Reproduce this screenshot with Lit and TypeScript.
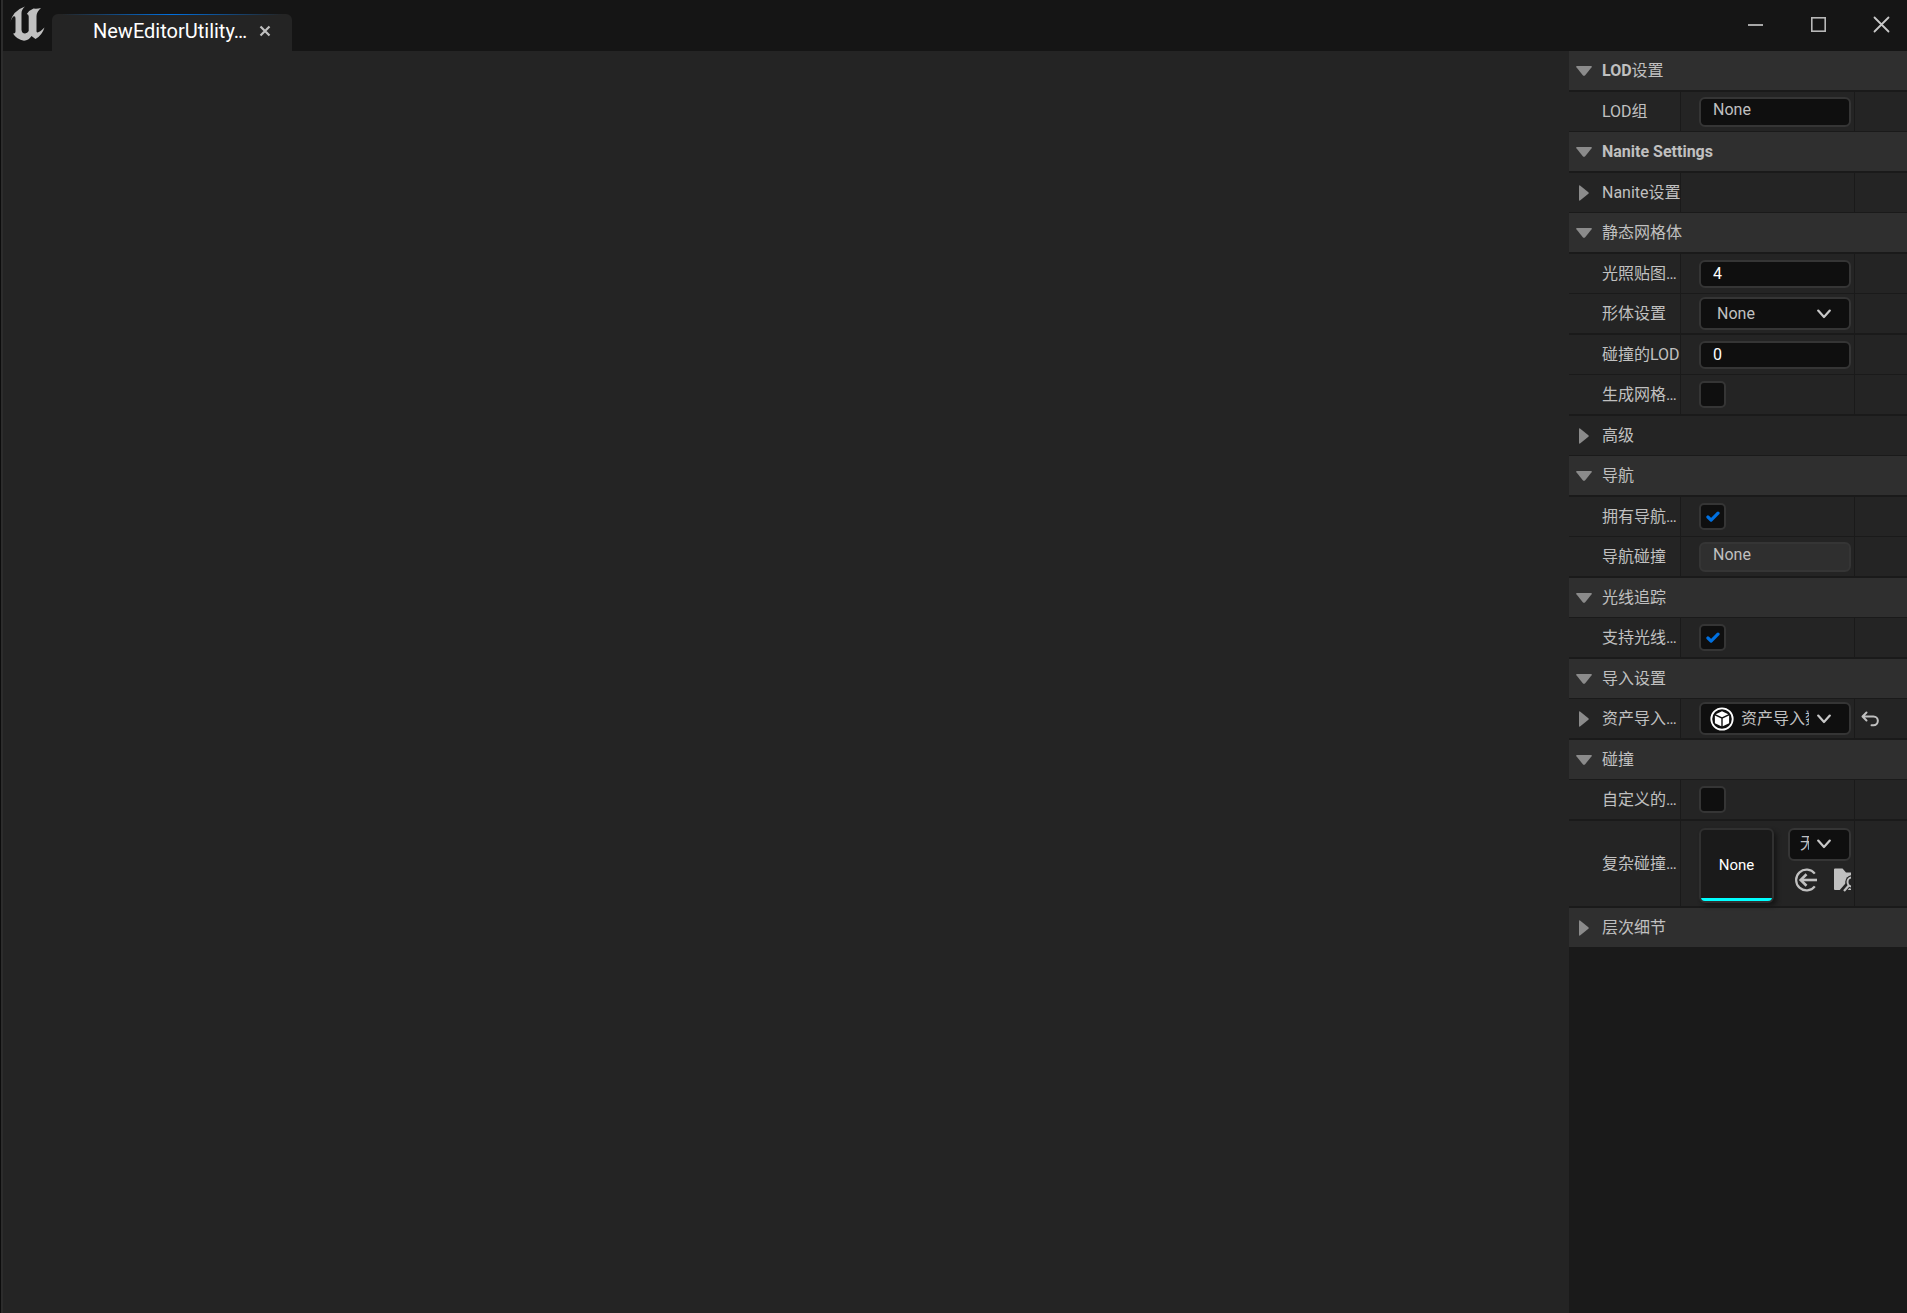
import { LitElement, html, css, svg, nothing, TemplateResult } from "lit";
import { customElement, state } from "lit/decorators.js";

type Row =
  | { kind: "category"; strong?: string; text?: string; open: boolean }
  | { kind: "group"; text: string }
  | { kind: "field"; text: string; id: string; expandable?: boolean; control?: TemplateResult; reset?: boolean; tall?: boolean };

const chevron = html`<svg class="chevron" viewBox="0 0 14 10" aria-hidden="true">
  <path d="M1.2 1.6 7 8 12.8 1.6" fill="none" stroke="#c8c8c8" stroke-width="2.2" stroke-linecap="round" stroke-linejoin="round" />
</svg>`;

const arrow = (open: boolean) => html`<svg class="arrow" viewBox="0 0 16 16" aria-hidden="true">
  ${open
    ? svg`<path d="M1 3h14q1.4.2.6 1.3L9.2 12.2Q8 13.4 6.8 12.2L.4 4.3Q-.4 3.2 1 3Z" fill="#8b8b8b"/>`
    : svg`<path d="M3 1.2Q3 0 4 .4L12.4 7.2Q13.2 8 12.4 8.8L4 15.6Q3 16 3 14.8Z" fill="#8b8b8b"/>`}
</svg>`;

const cube = html`<svg class="cube" viewBox="0 0 24 24" aria-hidden="true">
  <circle cx="12" cy="12" r="10.7" fill="none" stroke="#fff" stroke-width="1.8" />
  <path d="M12 4.2 18.3 7.2 12 10.3 5.7 7.2Z" fill="#fff" />
  <path d="M4.9 8.4 11.3 11.5V19.3L4.9 16.2Z" fill="#fff" />
  <path d="M19.1 8.4 12.7 11.5V19.3L19.1 16.2Z" fill="#fff" />
</svg>`;

const textBox = (id: string, value: string) => html`<input class="box text" id=${id} type="text" .value=${value} />`;
const numberBox = (id: string, value: string) =>
  html`<input class="box number" id=${id} type="text" inputmode="numeric" .value=${value} />`;
const tick = (id: string, on: boolean) => html`<span class="tick">
  <input id=${id} type="checkbox" .checked=${on} />
  <svg viewBox="0 0 14 12" aria-hidden="true"><path d="M1.9 6 5.1 9.1 12 2.2" fill="none" stroke="#0070e0" stroke-width="3.2" stroke-linecap="round" stroke-linejoin="round" /></svg>
</span>`;
const picker = (id: string, value: string, icon: TemplateResult | typeof nothing = nothing) => html`<span class="picker ${icon === nothing ? "" : "with-icon"}">
  <select class="box" id=${id}><option>${value}</option></select>${icon}${chevron}
</span>`;

const ROWS: Row[] = [
  { kind: "category", strong: "LOD", text: "设置", open: true },
  { kind: "field", id: "lod-group", text: "LOD组", control: textBox("lod-group", "None") },
  { kind: "category", strong: "Nanite Settings", open: true },
  { kind: "field", id: "nanite", text: "Nanite设置", expandable: true },
  { kind: "category", text: "静态网格体", open: true },
  { kind: "field", id: "lightmap", text: "光照贴图…", control: numberBox("lightmap", "4") },
  { kind: "field", id: "body", text: "形体设置", control: picker("body", "None") },
  { kind: "field", id: "collision-lod", text: "碰撞的LOD", control: numberBox("collision-lod", "0") },
  { kind: "field", id: "mesh-field", text: "生成网格…", control: tick("mesh-field", false) },
  { kind: "group", text: "高级" },
  { kind: "category", text: "导航", open: true },
  { kind: "field", id: "has-nav", text: "拥有导航…", control: tick("has-nav", true) },
  {
    kind: "field", id: "nav-collision", text: "导航碰撞",
    control: html`<input class="box text locked" id="nav-collision" type="text" .value=${"None"} readonly />`,
  },
  { kind: "category", text: "光线追踪", open: true },
  { kind: "field", id: "ray", text: "支持光线…", control: tick("ray", true) },
  { kind: "category", text: "导入设置", open: true },
  { kind: "field", id: "import", text: "资产导入…", expandable: true, reset: true, control: picker("import", "资产导入数据", cube) },
  { kind: "category", text: "碰撞", open: true },
  { kind: "field", id: "custom", text: "自定义的…", control: tick("custom", false) },
  {
    kind: "field", id: "complex", text: "复杂碰撞…", tall: true,
    control: html`<div class="asset">
      <button class="thumb">None</button>
      <div class="asset-side">
        ${picker("complex", "无")}
        <div class="tools">
          <button class="tool" aria-label="使用选中资产">
            <svg viewBox="0 0 24 24" aria-hidden="true"><g fill="none" stroke="#c0c0c0">
              <path d="M20.8 5.7A10.4 10.4 0 1 0 20.8 18.3" stroke-width="2.2" />
              <path d="M23 12H7" stroke-width="2.6" /><path d="M12.5 6.3 6.7 12l5.800 5.700" stroke-width="2.6" />
            </g></svg>
          </button>
          <button class="tool" aria-label="浏览资产">
            <svg viewBox="0 0 24 24" aria-hidden="true">
              <path d="M1 1.500Q1 .5 2 .5H9.500L13 4.500H22V22H2Q1 22 1 21Z" fill="#c0c0c0" />
              <circle cx="19" cy="14" r="6.800" fill="#242424" /><path d="M9 24 16 16" stroke="#242424" stroke-width="6" />
              <circle cx="19" cy="14" r="4.500" fill="none" stroke="#c0c0c0" stroke-width="2" /><path d="M11 23 15.800 17.500" stroke="#c0c0c0" stroke-width="2.200" />
            </svg>
          </button>
        </div>
      </div>
    </div>`,
  },
  { kind: "category", text: "层次细节", open: false },
];

@customElement("details-panel")
export class DetailsPanel extends LitElement {
  static styles = css`
    :host { display: block; background: #1a1a1a; color: #c0c0c0; font: 16px/20px Roboto, "Noto Sans CJK SC", sans-serif; }
    * { box-sizing: border-box; }
    button { margin: 0; padding: 0; border: 0; background: none; font: inherit; color: inherit; text-align: left; }
    .row { border-bottom: 1px solid #1a1a1a; }
    .row:nth-child(odd), .row.tall { border-bottom-width: 2px; }
    .bar { display: flex; align-items: center; gap: 10px; width: 100%; height: 39px; padding-left: 7px; }
    .category { background: #2f2f2f; }
    .field, .group { background: #242424; }
    .field { display: grid; grid-template-columns: 112px minmax(0, 1fr) 52px; min-height: 40px; }
    .name { display: flex; align-items: center; padding-left: 33px; white-space: nowrap; border-right: 1px solid #1a1a1a; }
    .name.expandable { gap: 10px; padding-left: 7px; }
    .value { display: flex; align-items: center; min-width: 0; height: 39px; padding: 0 3px 0 18px; border-right: 1px solid #1a1a1a; }
    .extra { display: flex; align-items: center; padding-left: 6px; }
    .tall .value { height: 85px; padding-top: 3px; }
    .arrow { flex: none; width: 16px; height: 16px; }
    .box { width: 100%; margin: 0; border: 2px solid #353535; border-radius: 6px; background: #0f0f0f; color: #c0c0c0; font: inherit; outline: 0; }
    .text { height: 30px; padding: 0 12px 4px; }
    .number { height: 28px; padding: 0 12px; color: #fff; }
    .locked { background: #2f2f2f; }
    .picker { display: grid; flex: 1; min-width: 0; align-items: center; }
    .picker > * { grid-area: 1 / 1; }
    .picker select { appearance: none; height: 33px; padding: 0 40px 0 16px; text-overflow: clip; }
    .picker.with-icon select { padding-left: 40px; }
    .chevron { justify-self: end; width: 14px; height: 10px; margin-right: 20px; pointer-events: none; }
    .cube { width: 24px; height: 24px; margin-left: 11px; pointer-events: none; }
    .tick { display: grid; place-items: center; }
    .tick > * { grid-area: 1 / 1; }
    .tick input { appearance: none; width: 27px; height: 27px; margin: 0; border: 2px solid #353535; border-radius: 5px; background: #0f0f0f; }
    .tick svg { visibility: hidden; width: 14px; height: 12px; pointer-events: none; }
    .tick input:checked + svg { visibility: visible; }
    .undo { display: flex; }
    .undo svg { width: 18px; height: 16px; }
    .asset { display: flex; flex: 1; min-width: 0; gap: 14px; }
    .thumb { flex: none; width: 75px; height: 75px; border: 2px solid #303030; border-radius: 6px; background: linear-gradient(#00ffff, #00ffff) bottom / 100% 3px no-repeat #1a1a1a; box-shadow: 3px 3px 4px #161616; color: #fff; font-size: 15px; text-align: center; }
    .asset-side { display: flex; flex: 1; flex-direction: column; gap: 7px; min-width: 0; }
    .asset-side .picker { flex: none; }
    .asset-side select { padding-left: 10px; }
    .tools { display: flex; gap: 15px; padding-left: 6px; overflow: hidden; }
    .tool { display: flex; flex: none; }
    .tool svg { width: 24px; height: 24px; }
    b { font-weight: 700; }
    .title { white-space: nowrap; }
  `;

  private renderRow(row: Row) {
    if (row.kind === "category") {
      return html`<div class="row category">
        <button class="bar" aria-expanded=${row.open}>
          ${arrow(row.open)}<span class="title">${row.strong ? html`<b>${row.strong}</b>` : nothing}${row.text ?? nothing}</span>
        </button>
      </div>`;
    }
    if (row.kind === "group") {
      return html`<div class="row group"><button class="bar" aria-expanded="false">${arrow(false)}${row.text}</button></div>`;
    }
    return html`<div class="row field ${row.tall ? "tall" : ""}">
      <div class="name ${row.expandable ? "expandable" : ""}">
        ${row.expandable ? html`<button class="arrow" aria-label="展开" aria-expanded="false">${arrow(false)}</button>` : nothing}
        ${row.control ? html`<label for=${row.id}>${row.text}</label>` : html`<span>${row.text}</span>`}
      </div>
      <div class="value">${row.control ?? nothing}</div>
      <div class="extra">
        ${row.reset
          ? html`<button class="undo" aria-label="重置"><svg viewBox="0 0 18 16" aria-hidden="true">
              <path d="M5.500 1.500 1.500 5.500 5.500 9.500M1.800 5.500H12.500A4.300 4.300 0 0 1 12.500 14.200H10.500" fill="none" stroke="#c0c0c0" stroke-width="2" stroke-linecap="round" stroke-linejoin="round" />
            </svg></button>`
          : nothing}
      </div>
    </div>`;
  }

  render() {
    return html`${ROWS.map((row) => this.renderRow(row))}`;
  }
}

@customElement("app-root")
export class AppRoot extends LitElement {
  @state() private tabTitle = "NewEditorUtility…";

  static styles = css`
    :host { display: flex; flex-direction: column; box-sizing: border-box; min-height: 100vh; border-left: 1px solid #0c0c0c; background: #242424; font-family: Roboto, "Noto Sans CJK SC", sans-serif; }
    * { box-sizing: border-box; }
    button { display: flex; align-items: center; justify-content: center; margin: 0; padding: 0; border: 0; background: none; }
    .titlebar { display: flex; height: 51px; border-left: 2px solid #2c2c2c; background: #151515; }
    .logo { width: 36px; height: 36px; margin: 6px 6px 0 7px; }
    .tab { display: flex; align-items: center; gap: 12px; width: 240px; height: 37px; margin-top: 14px; padding: 0 20px 3px 41px; border-radius: 6px 6px 0 0; background: linear-gradient(90deg, #242424 4%, #0070e0 50%, #242424 96%) top / 100% 1px no-repeat #242424; color: #fff; font-size: 20px; line-height: 24px; white-space: nowrap; }
    .close { width: 12px; height: 12px; }
    .window { display: flex; gap: 33px; height: 48px; margin-left: auto; padding-right: 11px; }
    .window button { width: 30px; }
    .window svg { width: 18px; height: 18px; }
    .body { display: flex; flex: 1; border-left: 2px solid #2c2c2c; }
    .canvas { flex: 1; }
    details-panel { flex: none; width: 338px; }
  `;

  render() {
    return html`
      <header class="titlebar">
        <svg class="logo" viewBox="0 0 36 36" aria-hidden="true">
          <path fill="#c0c0c0" d="M0 16.500Q3 4.500 15 .5Q11.500 3.500 11.500 7V24Q12 27.500 15 27.500Q17.500 27.300 18.700 25V10.500Q18.700 8 16.800 8Q19.500 4 23.500 2.500Q27 3 31 2Q26.500 6 26.500 10V25.500Q27.500 28.500 34.500 21.500Q32 29.500 25.500 33L21.500 30Q18.500 34.500 14 34.700Q6.500 33.500 3 27.500Q5.500 28 5.500 25.500V12.500Q5.500 9.800 3.800 10.300Q1.800 11.500 0 16.500Z" />
        </svg>
        <div class="tab">
          <span>${this.tabTitle}</span>
          <button class="close" aria-label="关闭标签页"><svg width="12" height="12" viewBox="0 0 12 12" aria-hidden="true"><path d="M1.500 1.500 10.500 10.500M10.500 1.500 1.500 10.500" stroke="#c0c0c0" stroke-width="2.200" /></svg></button>
        </div>
        <div class="window">
          <button aria-label="最小化"><svg viewBox="0 0 18 18" aria-hidden="true"><path d="M2 10H17" stroke="#b8b8b8" stroke-width="1.800" /></svg></button>
          <button aria-label="最大化"><svg viewBox="0 0 18 18" aria-hidden="true"><rect x="2.800" y="2.800" width="13.400" height="13.400" fill="none" stroke="#b8b8b8" stroke-width="1.600" /></svg></button>
          <button aria-label="关闭"><svg viewBox="0 0 18 18" aria-hidden="true"><path d="M2.500 2.500 16.500 16.500M16.500 2.500 2.500 16.500" stroke="#c8c8c8" stroke-width="1.800" stroke-linecap="round" /></svg></button>
        </div>
      </header>
      <main class="body">
        <section class="canvas"></section>
        <details-panel></details-panel>
      </main>
    `;
  }
}
